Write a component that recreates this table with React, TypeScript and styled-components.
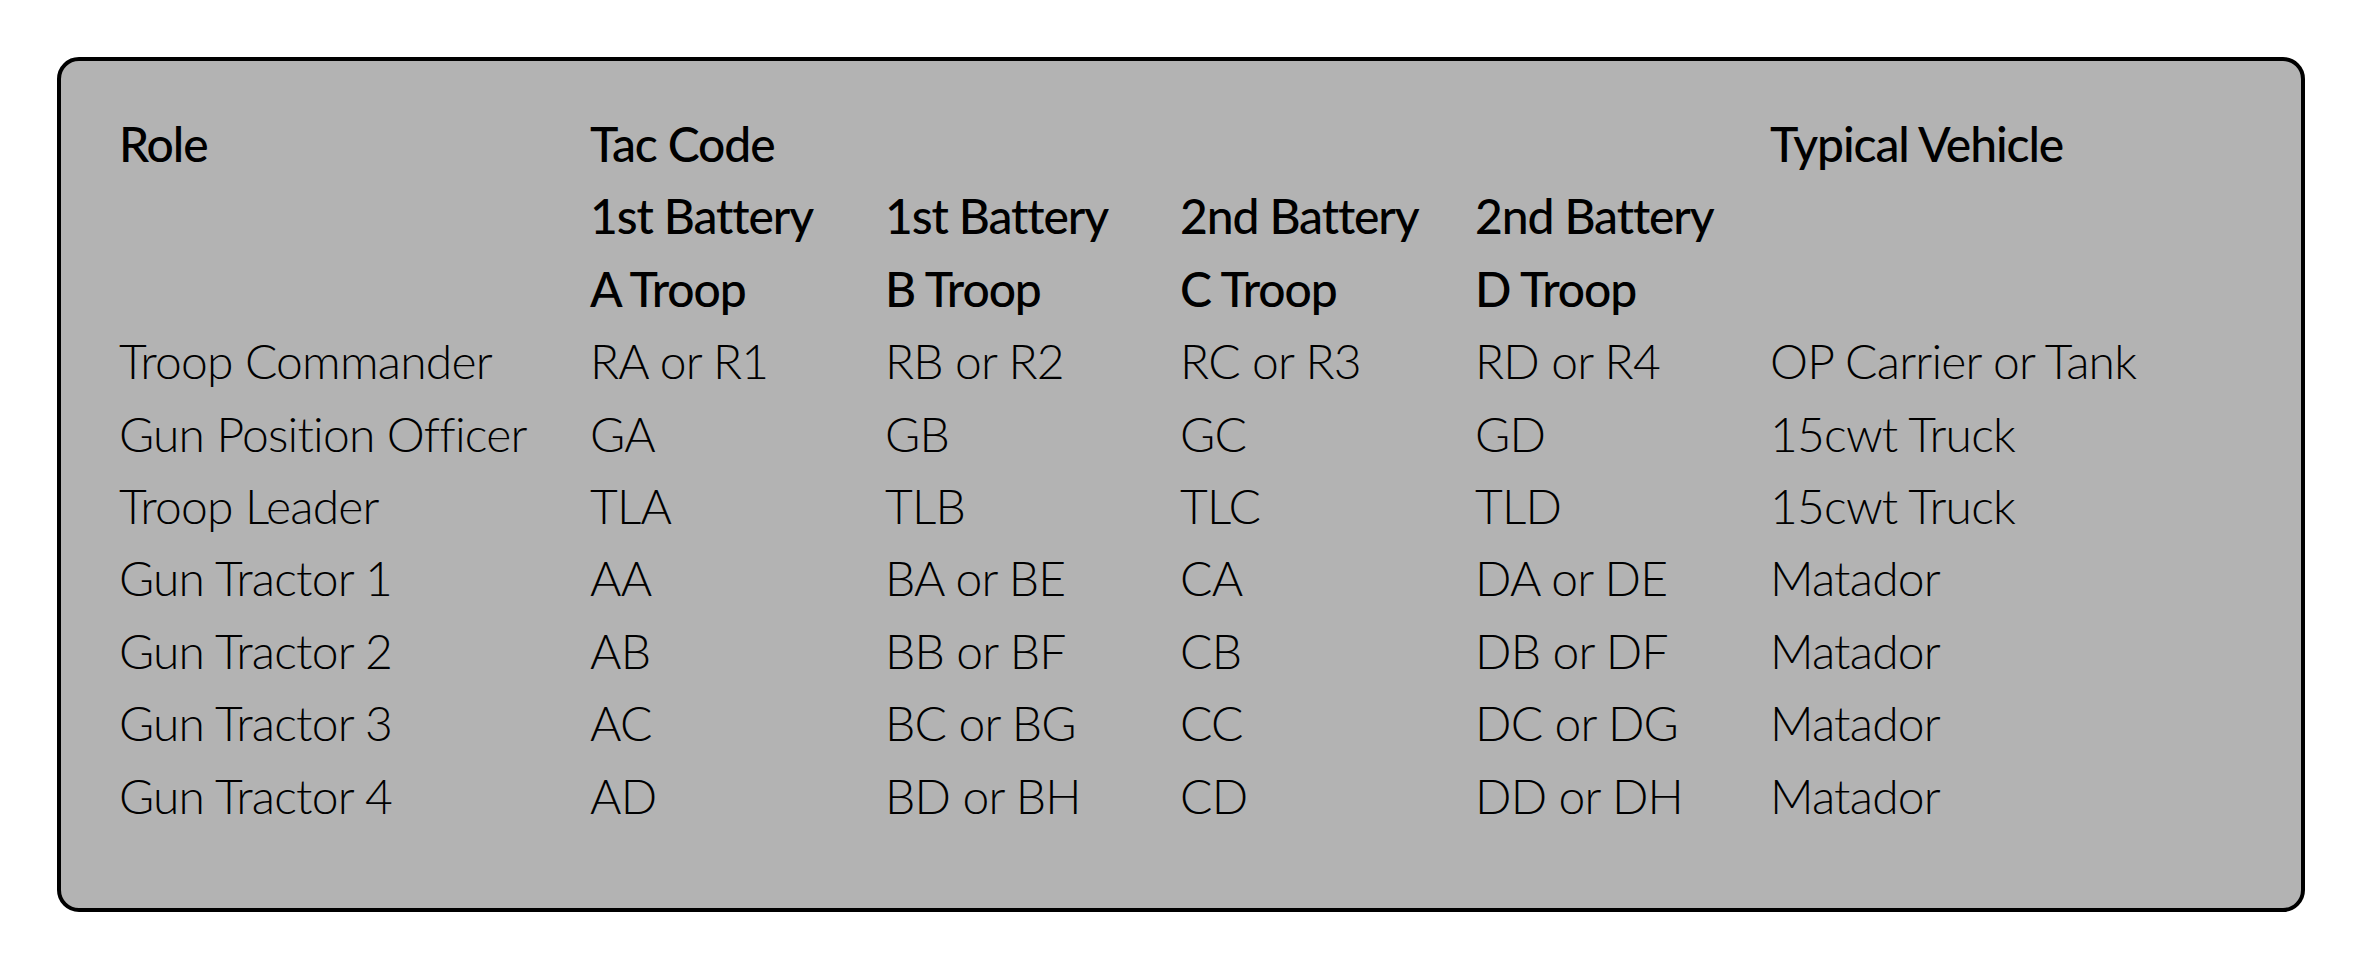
import styled, { createGlobalStyle } from "styled-components";

const GlobalStyle = createGlobalStyle`
  html, body {
    margin: 0;
    padding: 0;
    background: #ffffff;
  }
  body {
    font-family: Lato, "Open Sans", "DejaVu Sans", sans-serif;
    color: #000;
  }
`;

const Page = styled.div`
  width: 2363px;
  height: 969px;
  padding: 57px 58px 57px 57px;
  box-sizing: border-box;
  display: flex;
`;

const Panel = styled.div`
  flex: 1;
  background: #b3b3b3;
  border: 4px solid #000;
  border-radius: 22px;
  padding: 47px 40px 0 58px;
`;

const Table = styled.div`
  display: grid;
  grid-template-columns: 471px repeat(4, 295px) 1fr;
  grid-auto-rows: 72.4px;
  font-size: 48px;
  line-height: 72.4px;
`;

const Cell = styled.div<{ $head?: boolean }>`
  font-weight: ${(p) => (p.$head ? 500 : 300)};
  letter-spacing: ${(p) => (p.$head ? "-1.1px" : "-0.8px")};
  white-space: nowrap;
`;

const header: string[][] = [
  ["Role", "Tac Code", "", "", "", "Typical Vehicle"],
  ["", "1st Battery", "1st Battery", "2nd Battery", "2nd Battery", ""],
  ["", "A Troop", "B Troop", "C Troop", "D Troop", ""],
];

const rows: string[][] = [
  ["Troop Commander", "RA or R1", "RB or R2", "RC or R3", "RD or R4", "OP Carrier or Tank"],
  ["Gun Position Officer", "GA", "GB", "GC", "GD", "15cwt Truck"],
  ["Troop Leader", "TLA", "TLB", "TLC", "TLD", "15cwt Truck"],
  ["Gun Tractor 1", "AA", "BA or BE", "CA", "DA or DE", "Matador"],
  ["Gun Tractor 2", "AB", "BB or BF", "CB", "DB or DF", "Matador"],
  ["Gun Tractor 3", "AC", "BC or BG", "CC", "DC or DG", "Matador"],
  ["Gun Tractor 4", "AD", "BD or BH", "CD", "DD or DH", "Matador"],
];

export default function App() {
  return (
    <>
      <GlobalStyle />
      <Page>
        <Panel>
          <Table>
            {header.map((r, i) =>
              r.map((c, j) => (
                <Cell key={`h${i}-${j}`} $head>
                  {c}
                </Cell>
              ))
            )}
            {rows.map((r, i) =>
              r.map((c, j) => <Cell key={`r${i}-${j}`}>{c}</Cell>)
            )}
          </Table>
        </Panel>
      </Page>
    </>
  );
}
